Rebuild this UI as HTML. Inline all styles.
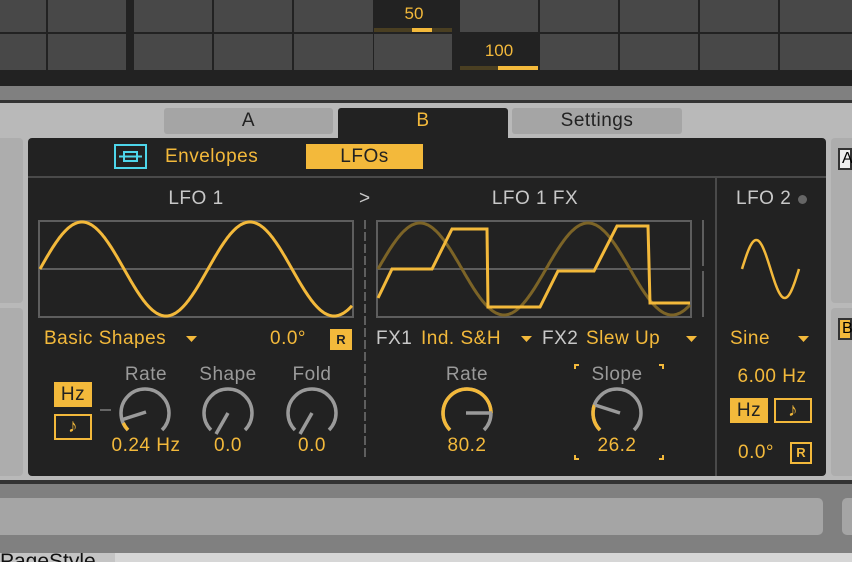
<!DOCTYPE html>
<html><head><meta charset="utf-8"><style>
*{margin:0;padding:0;box-sizing:border-box}
body{width:852px;height:562px;overflow:hidden;background:#b9b9b9;font-family:"Liberation Sans",sans-serif;position:relative}
.a{position:absolute}
.y{color:#f3b93b}.g{color:#c8c8c8}.m{color:#9a9a9a}
.t{font-size:19px;line-height:20px;white-space:nowrap;letter-spacing:0.5px}
</style></head><body>
<div class="a" style="left:0;top:0;width:852px;height:86px;background:#222"></div>
<svg class="a" style="left:0;top:0" width="852" height="70">
<g fill="#484848">
<rect x="0" y="0" width="46" height="32"/><rect x="48" y="0" width="78" height="32"/>
<rect x="134" y="0" width="78" height="32"/><rect x="214" y="0" width="78" height="32"/><rect x="294" y="0" width="79" height="32"/>
<rect x="460" y="0" width="78" height="32"/><rect x="540" y="0" width="78" height="32"/><rect x="620" y="0" width="78" height="32"/><rect x="700" y="0" width="78" height="32"/><rect x="780" y="0" width="72" height="32"/>
<rect x="0" y="34" width="46" height="36"/><rect x="48" y="34" width="78" height="36"/>
<rect x="134" y="34" width="78" height="36"/><rect x="214" y="34" width="78" height="36"/><rect x="294" y="34" width="79" height="36"/><rect x="374" y="34" width="78" height="36"/>
<rect x="540" y="34" width="78" height="36"/><rect x="620" y="34" width="78" height="36"/><rect x="700" y="34" width="78" height="36"/><rect x="780" y="34" width="72" height="36"/>
</g>
<rect x="374" y="28" width="78" height="4" fill="#4a3f22"/><rect x="412" y="28" width="20" height="4" fill="#f3b93b"/>
<rect x="460" y="66" width="78" height="4" fill="#4a3f22"/><rect x="498" y="66" width="40" height="4" fill="#f3b93b"/>
<text x="414" y="19" fill="#f3b93b" font-size="17" text-anchor="middle" font-family="Liberation Sans">50</text>
<text x="499" y="56" fill="#f3b93b" font-size="17" text-anchor="middle" font-family="Liberation Sans">100</text>
</svg>
<div class="a" style="left:0;top:86px;width:852px;height:14px;background:#808080"></div>
<div class="a" style="left:0;top:100px;width:852px;height:3px;background:#333"></div>
<div class="a t" style="left:164px;top:108px;width:169px;height:26px;background:#a5a5a5;border-radius:3px;color:#222;text-align:center;line-height:26px">A</div>
<div class="a t y" style="left:338px;top:108px;width:170px;height:32px;background:#222;border-radius:3px 3px 0 0;text-align:center;line-height:26px">B</div>
<div class="a t" style="left:512px;top:108px;width:170px;height:26px;background:#a5a5a5;border-radius:3px;color:#222;text-align:center;line-height:26px">Settings</div>
<div class="a" style="left:0;top:138px;width:23px;height:165px;background:#adadad;border-radius:0 4px 4px 0"></div>
<div class="a" style="left:0;top:308px;width:23px;height:168px;background:#adadad;border-radius:0 4px 4px 0"></div>
<div class="a" style="left:831px;top:138px;width:21px;height:165px;background:#adadad;border-radius:4px 0 0 4px"></div>
<div class="a" style="left:831px;top:308px;width:21px;height:168px;background:#adadad;border-radius:4px 0 0 4px"></div>
<div class="a" style="left:838px;top:148px;width:14px;height:22px;background:#eee;border:2px solid #333;font-size:16px;line-height:18px;padding-left:2px">A</div>
<div class="a" style="left:838px;top:318px;width:14px;height:22px;background:#f3b93b;border:2px solid #333;font-size:16px;line-height:18px;padding-left:2px">B</div>
<div class="a" style="left:28px;top:138px;width:798px;height:338px;background:#222;border-radius:4px"></div>
<div class="a" style="left:114px;top:144px;width:33px;height:25px;border:2px solid #4ed6ea"></div>
<svg class="a" style="left:114px;top:144px" width="33" height="25"><rect x="10" y="8" width="13" height="9" fill="none" stroke="#4ed6ea" stroke-width="2"/><line x1="5" y1="12.5" x2="28" y2="12.5" stroke="#4ed6ea" stroke-width="2"/></svg>
<div class="a t y" style="left:165px;top:147px">Envelopes</div>
<div class="a t" style="left:306px;top:144px;width:117px;height:25px;background:#f3b93b;color:#222;text-align:center;line-height:25px">LFOs</div>
<div class="a" style="left:28px;top:176px;width:798px;height:2px;background:#4a4a4a"></div>
<div class="a" style="left:715px;top:178px;width:2px;height:298px;background:#4a4a4a"></div>
<div class="a t g" style="left:150px;top:189px;width:92px;text-align:center">LFO 1</div>
<div class="a t g" style="left:359px;top:189px">&gt;</div>
<div class="a t g" style="left:475px;top:189px;width:120px;text-align:center">LFO 1 FX</div>
<div class="a t g" style="left:736px;top:189px">LFO 2</div>
<div class="a" style="left:798px;top:195px;width:9px;height:9px;border-radius:50%;background:#666"></div>
<svg class="a" style="left:0;top:0" width="852" height="562">
<g fill="none" stroke="#5e5e5e" stroke-width="2">
<rect x="39" y="221" width="314" height="96"/><line x1="39" y1="269" x2="353" y2="269"/>
<rect x="377" y="221" width="314" height="96"/><line x1="377" y1="269" x2="691" y2="269"/>
<line x1="703" y1="220" x2="703" y2="266"/><line x1="703" y1="271" x2="703" y2="317"/>
<line x1="365" y1="220" x2="365" y2="458" stroke-dasharray="9,3"/>
</g>
<path id="s1" fill="none" stroke="#f3b93b" stroke-width="3"/>
<path id="s2" fill="none" stroke="#7c6427" stroke-width="3"/>
<polyline fill="none" stroke="#f3b93b" stroke-width="3" points="378,298 392,269 432,269 452,229 487,229 488,307 540,307 558,271 594,271 617,226 648,226 650,303 690,303"/>
<path id="s3" fill="none" stroke="#f3b93b" stroke-width="2.5"/>
<g fill="none" stroke-width="3.5" stroke-linecap="butt">
<path d="M128 430 A24 24 0 1 1 162 430" stroke="#9a9a9a"/>
<path d="M128 430 A24 24 0 0 1 123.3 423" stroke="#f3b93b"/>
<line x1="146" y1="412" x2="121" y2="420" stroke="#9a9a9a"/>
<path d="M211 430 A24 24 0 1 1 245 430" stroke="#9a9a9a"/>
<line x1="228" y1="413" x2="216" y2="434" stroke="#9a9a9a"/>
<path d="M295 430 A24 24 0 1 1 329 430" stroke="#9a9a9a"/>
<line x1="312" y1="413" x2="300" y2="434" stroke="#9a9a9a"/>
<path d="M450 430 A24 24 0 1 1 484 430" stroke="#9a9a9a"/>
<path d="M450 430 A24 24 0 1 1 491 413" stroke="#f3b93b"/>
<line x1="466" y1="413" x2="492" y2="413" stroke="#9a9a9a"/>
<path d="M600 430 A24 24 0 1 1 634 430" stroke="#9a9a9a"/>
<path d="M600 430 A24 24 0 0 1 594.4 405" stroke="#f3b93b"/>
<line x1="620" y1="413" x2="595" y2="405" stroke="#9a9a9a"/>
<line x1="100" y1="410" x2="111" y2="410" stroke="#666" stroke-width="2"/>
</g>
<g fill="none" stroke="#f3b93b" stroke-width="2">
<path d="M575 369 V365 H579 M659 365 H663 V369 M575 455 V459 H579 M659 459 H663 V455"/>
</g>
<g fill="#f3b93b"><path d="M186 336 h11 l-5.5 6z"/><path d="M521 336 h11 l-5.5 6z"/><path d="M686 336 h11 l-5.5 6z"/><path d="M798 336 h11 l-5.5 6z"/></g>
</svg>
<div class="a t y" style="left:44px;top:329px">Basic Shapes</div>
<div class="a t y" style="left:270px;top:329px">0.0°</div>
<div class="a" style="left:330px;top:329px;width:22px;height:21px;background:#f3b93b;color:#222;font-size:13px;font-weight:bold;text-align:center;line-height:21px">R</div>
<div class="a t g" style="left:376px;top:329px">FX1</div>
<div class="a t y" style="left:421px;top:329px">Ind. S&amp;H</div>
<div class="a t g" style="left:542px;top:329px">FX2</div>
<div class="a t y" style="left:586px;top:329px">Slew Up</div>
<div class="a t y" style="left:730px;top:329px">Sine</div>
<div class="a t m" style="left:105px;top:365px;width:82px;text-align:center">Rate</div>
<div class="a t m" style="left:187px;top:365px;width:82px;text-align:center">Shape</div>
<div class="a t m" style="left:271px;top:365px;width:82px;text-align:center">Fold</div>
<div class="a t m" style="left:426px;top:365px;width:82px;text-align:center">Rate</div>
<div class="a t m" style="left:576px;top:365px;width:82px;text-align:center">Slope</div>
<div class="a t y" style="left:95px;top:436px;width:102px;text-align:center">0.24 Hz</div>
<div class="a t y" style="left:187px;top:436px;width:82px;text-align:center">0.0</div>
<div class="a t y" style="left:271px;top:436px;width:82px;text-align:center">0.0</div>
<div class="a t y" style="left:426px;top:436px;width:82px;text-align:center">80.2</div>
<div class="a t y" style="left:576px;top:436px;width:82px;text-align:center">26.2</div>
<div class="a t" style="left:54px;top:382px;width:38px;height:25px;background:#f3b93b;color:#222;text-align:center;line-height:25px">Hz</div>
<div class="a t y" style="left:54px;top:414px;width:38px;height:26px;border:2px solid #f3b93b;text-align:center;line-height:22px">♪</div>
<div class="a t y" style="left:726px;top:367px;width:92px;text-align:center">6.00 Hz</div>
<div class="a t" style="left:730px;top:398px;width:38px;height:25px;background:#f3b93b;color:#222;text-align:center;line-height:25px">Hz</div>
<div class="a t y" style="left:774px;top:398px;width:38px;height:25px;border:2px solid #f3b93b;text-align:center;line-height:21px">♪</div>
<div class="a t y" style="left:738px;top:443px">0.0°</div>
<div class="a" style="left:790px;top:442px;width:22px;height:22px;border:2px solid #f3b93b;color:#f3b93b;font-size:13px;font-weight:bold;text-align:center;line-height:18px">R</div>
<div class="a" style="left:0;top:480px;width:852px;height:4px;background:#333"></div>
<div class="a" style="left:0;top:484px;width:852px;height:69px;background:#808080"></div>
<div class="a" style="left:0;top:498px;width:823px;height:37px;background:#a5a5a5;border-radius:0 5px 5px 0"></div>
<div class="a" style="left:842px;top:498px;width:10px;height:37px;background:#a5a5a5;border-radius:5px 0 0 5px"></div>
<div class="a" style="left:0;top:553px;width:852px;height:9px;background:#d6d6d6"></div>
<div class="a" style="left:0;top:553px;width:115px;height:9px;background:#c4c4c4;overflow:hidden"><div style="font-size:21px;line-height:20px;margin-top:-1px;color:#111">PageStyle</div></div>
<script>
function sp(id,x0,x1,cy,a,per,ph){var d='';for(var x=x0;x<=x1;x+=1){var y=cy-a*Math.sin(2*Math.PI*(x-x0)/per+ph);d+=(d?'L':'M')+x+' '+y.toFixed(1);}document.getElementById(id).setAttribute('d',d);}
sp('s1',40,352,269,47,168,0);sp('s2',378,690,269,46,168,0);sp('s3',742,799,269,29,57,0);
</script>
</body></html>
